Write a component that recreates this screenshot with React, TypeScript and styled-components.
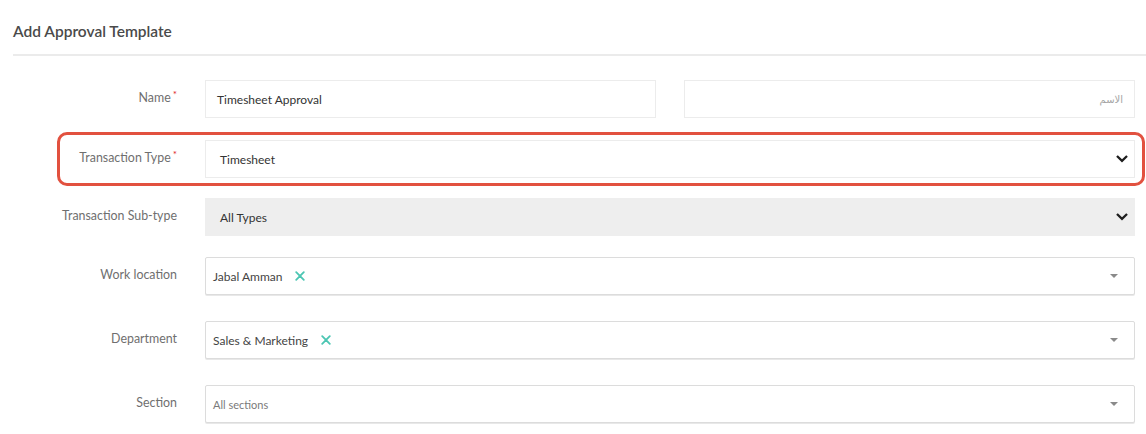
import React from "react";
import styled, { createGlobalStyle, css } from "styled-components";

const GlobalStyle = createGlobalStyle`
  html, body { margin: 0; padding: 0; background: #ffffff; }
  body { font-family: Lato, "Noto Sans", "Liberation Sans", sans-serif; }
  * { box-sizing: border-box; }
`;

const Page = styled.div`
  width: 1146px;
  height: 434px;
  padding-left: 13px;
  overflow: hidden;
  background: #fff;
`;

const Header = styled.div`
  padding: 22px 0 14px 0;
  border-bottom: 2px solid #ebebeb;
`;

const Title = styled.h1`
  margin: 0;
  font-size: 15.5px;
  line-height: 18px;
  font-weight: 600;
  color: #4a4a4a;
`;

const Form = styled.div`
  padding: 24px 11px 0 0;
  display: flex;
  flex-direction: column;
`;

const Row = styled.div<{ $top: number; $highlight?: boolean }>`
  position: relative;
  display: flex;
  align-items: center;
  margin-top: ${(p) => p.$top}px;
  ${(p) =>
    p.$highlight &&
    css`
      &::after {
        content: "";
        position: absolute;
        left: 44px;
        right: -10px;
        top: -8px;
        bottom: -8px;
        border: 3px solid #e2513f;
        border-radius: 10px;
        pointer-events: none;
      }
    `}
`;

const Label = styled.label`
  width: 165px;
  flex: none;
  text-align: right;
  font-size: 12.4px;
  color: #6f6f6f;
  padding-right: 1px;
  margin-top: -3px;
`;

const Required = styled.span`
  color: #e0262b;
  font-size: 10px;
  position: relative;
  top: -4px;
  margin-left: 2px;
`;

const Fields = styled.div`
  flex: 1;
  display: flex;
  gap: 28px;
  margin-left: 27px;
`;

const TextBox = styled.div<{ $rtl?: boolean }>`
  flex: 1;
  height: 38px;
  border: 1px solid #ececec;
  background: #fff;
  display: flex;
  align-items: center;
  justify-content: ${(p) => (p.$rtl ? "flex-end" : "flex-start")};
  padding: 0 11px;
  font-size: 12px;
  color: #333;
`;

const Placeholder = styled.span`
  font-family: "DejaVu Sans", "Noto Sans", sans-serif;
  font-size: 10px;
  color: #a5a5a5;
`;

const SelectBox = styled.div<{ $disabled?: boolean }>`
  flex: 1;
  height: 38px;
  border: 1px solid ${(p) => (p.$disabled ? "#eeeeee" : "#ececec")};
  background: ${(p) => (p.$disabled ? "#eeeeee" : "#fff")};
  display: flex;
  align-items: center;
  justify-content: space-between;
  padding: 0 6px 0 14px;
  font-size: 12px;
  color: #333;
`;

const MultiBox = styled.div`
  flex: 1;
  height: 38px;
  border: 1px solid #dcdcdc;
  box-shadow: 0 1px 0 #e8e8e8;
  border-radius: 2px;
  background: #fff;
  display: flex;
  align-items: center;
  justify-content: space-between;
  padding: 0 16px 0 7px;
  font-size: 12px;
  color: #444;
`;

const Chip = styled.span`
  display: inline-flex;
  align-items: center;
  gap: 13px;
`;

const Hint = styled.span`
  font-size: 11px;
  color: #7a7a7a;
`;

const Chevron = () => (
  <svg width="12" height="8" viewBox="0 0 12 8">
    <path d="M1.8 1.8 L6 5.8 L10.2 1.8" fill="none" stroke="#1e1e1e" strokeWidth="2.3" strokeLinecap="square" />
  </svg>
);

const Caret = () => (
  <svg width="8" height="4" viewBox="0 0 8 4">
    <path d="M0 0 H8 L4 4 Z" fill="#8a8a8a" />
  </svg>
);

const RemoveIcon = () => (
  <svg width="10" height="10" viewBox="0 0 10 10">
    <path d="M1.2 1.2 L8.8 8.8 M8.8 1.2 L1.2 8.8" stroke="#4cc6b3" strokeWidth="1.8" strokeLinecap="round" />
  </svg>
);

export default function App() {
  return (
    <Page>
      <GlobalStyle />
      <Header>
        <Title>Add Approval Template</Title>
      </Header>
      <Form>
        <Row $top={0}>
          <Label>
            Name<Required>*</Required>
          </Label>
          <Fields>
            <TextBox>Timesheet Approval</TextBox>
            <TextBox $rtl>
              <Placeholder>الاسم</Placeholder>
            </TextBox>
          </Fields>
        </Row>
        <Row $top={22} $highlight>
          <Label>
            Transaction Type<Required>*</Required>
          </Label>
          <Fields>
            <SelectBox>
              <span>Timesheet</span>
              <Chevron />
            </SelectBox>
          </Fields>
        </Row>
        <Row $top={20}>
          <Label>Transaction Sub-type</Label>
          <Fields>
            <SelectBox $disabled>
              <span>All Types</span>
              <Chevron />
            </SelectBox>
          </Fields>
        </Row>
        <Row $top={21}>
          <Label>Work location</Label>
          <Fields>
            <MultiBox>
              <Chip>
                Jabal Amman
                <RemoveIcon />
              </Chip>
              <Caret />
            </MultiBox>
          </Fields>
        </Row>
        <Row $top={26}>
          <Label>Department</Label>
          <Fields>
            <MultiBox>
              <Chip>
                Sales &amp; Marketing
                <RemoveIcon />
              </Chip>
              <Caret />
            </MultiBox>
          </Fields>
        </Row>
        <Row $top={26}>
          <Label>Section</Label>
          <Fields>
            <MultiBox>
              <Hint>All sections</Hint>
              <Caret />
            </MultiBox>
          </Fields>
        </Row>
      </Form>
    </Page>
  );
}
